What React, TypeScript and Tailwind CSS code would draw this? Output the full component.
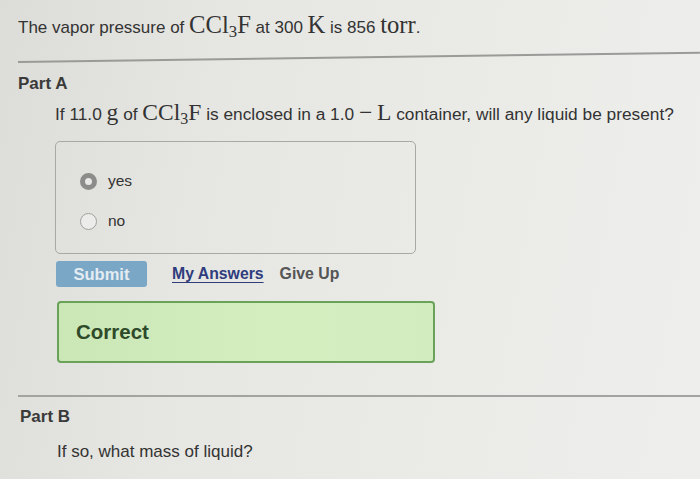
import React from "react";

function M({ children, big }: { children: React.ReactNode; big?: boolean }) {
  return (
    <span className={big ? "font-['Liberation_Serif',serif] text-[1.45em] leading-none" : "font-['Liberation_Serif',serif] text-[1.36em] leading-none"}>
      {children}
    </span>
  );
}

function Chem({ big }: { big?: boolean }) {
  return (
    <M big={big}>
      CCl<span className="text-[0.68em] relative top-[0.22em]">3</span>F
    </M>
  );
}

export default function App() {
  return (
    <div className="w-[700px] h-[479px] overflow-hidden relative font-['Liberation_Sans',Arial,sans-serif] text-[#333] bg-[linear-gradient(100deg,#dcdcd8_0%,#e6e6e2_30%,#ebebe8_70%,#eeeeec_100%)]">
      <div className="pt-[13px] pl-[18px] text-[17px] leading-[20px] h-[35px] whitespace-nowrap">
        The vapor pressure of <Chem big /> at 300 <M big>K</M> is 856 <M big>torr</M>.
      </div>
      <div className="mt-[26px] ml-[18px] h-[2px] bg-[#9a9a98] -rotate-[0.78deg] origin-left"></div>
      <div className="mt-[11px] pl-[18px] text-[17px] font-bold leading-[20px] text-[#3a3a3a]">Part A</div>
      <div className="mt-[7px] pl-[55px] text-[17.3px] leading-[22px] h-[22px] whitespace-nowrap">
        If 11.0 <M>g</M> of <Chem /> is enclosed in a 1.0 <M>−</M> <M>L</M> container, will any liquid be present?
      </div>
      <div className="ml-[55px] mt-[18px] w-[361px] h-[113px] border border-[#a8a8a6] rounded-[5px] flex flex-col pl-[24px] pt-[30px] gap-[22px] text-[15.5px]">
        <label className="flex items-center gap-[11px] h-[18px]">
          <span className="w-[17px] h-[17px] rounded-full border-[5px] border-[#8c8c8a] bg-[#e8e8e6]"></span>
          <span>yes</span>
        </label>
        <label className="flex items-center gap-[11px] h-[18px]">
          <span className="w-[17px] h-[17px] rounded-full border border-[#a0a09e] bg-[#ececea]"></span>
          <span>no</span>
        </label>
      </div>
      <div className="ml-[56px] mt-[7px] flex items-center">
        <button className="w-[91px] h-[26px] rounded-[3px] bg-[#7aa7c6] text-[#e4ecf2] font-bold text-[16.5px]">Submit</button>
        <span className="ml-[25px] text-[15.8px] font-bold text-[#2f3d7d] underline underline-offset-[3px]">My Answers</span>
        <span className="ml-[16px] text-[15.8px] font-bold text-[#555]">Give Up</span>
      </div>
      <div className="ml-[57px] mt-[14px] w-[378px] h-[62px] rounded-[4px] border-2 border-[#6aa25a] bg-[linear-gradient(90deg,#cbe7b6_0%,#d4eec0_60%,#d2ecbf_100%)] flex items-center pl-[17px]">
        <span className="text-[20.5px] font-bold text-[#2e4a2a]">Correct</span>
      </div>
      <div className="mt-[32px] ml-[18px] h-[2px] bg-[#a3a3a1]"></div>
      <div className="mt-[10px] pl-[20px] text-[17px] font-bold leading-[20px] text-[#3a3a3a]">Part B</div>
      <div className="mt-[15px] pl-[57px] text-[17px] leading-[20px]">If so, what mass of liquid?</div>
    </div>
  );
}
